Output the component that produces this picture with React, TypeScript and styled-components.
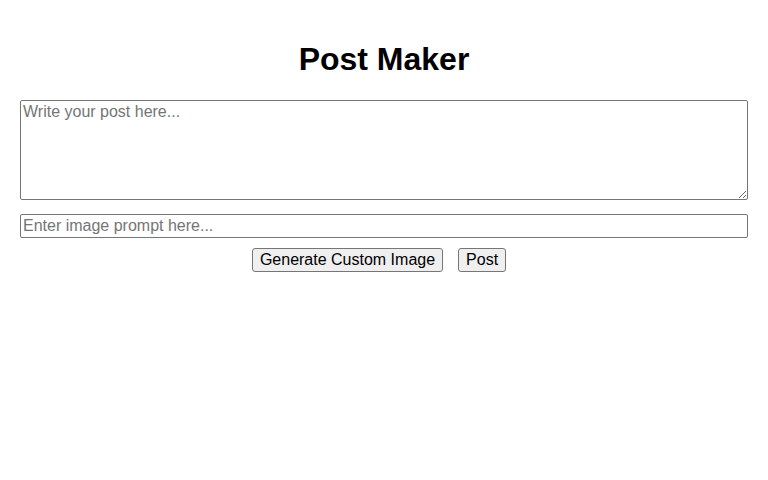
import React, { useState } from 'react';
import styled, { createGlobalStyle } from 'styled-components';

const GlobalStyle = createGlobalStyle`
  html, body {
    margin: 0;
    padding: 0;
    background: #fff;
    font-family: "Liberation Sans", Arial, sans-serif;
  }
`;

const Page = styled('div')`
  padding: 20px;
  display: flex;
  flex-direction: column;
`;

const Title = styled('h1')`
  margin: 21px 0 22px;
  font-size: 32px;
  line-height: 37px;
  font-weight: bold;
  text-align: center;
  color: #000;
`;

const PostArea = styled('textarea')`
  box-sizing: border-box;
  width: 100%;
  height: 100px;
  margin: 0;
  padding: 2px;
  font-family: "Liberation Sans", Arial, sans-serif;
  font-size: 16px;
  border: 1px solid #767676;
  border-radius: 2px;
  resize: vertical;
  &::placeholder {
    color: #757575;
  }
`;

const PromptInput = styled('input')`
  box-sizing: border-box;
  width: 100%;
  height: 24px;
  margin: 14px 0 0;
  padding: 1px 2px;
  font-family: "Liberation Sans", Arial, sans-serif;
  font-size: 16px;
  border: 1px solid #767676;
  border-radius: 2px;
  &::placeholder {
    color: #757575;
  }
`;

const Actions = styled('div')`
  margin-top: 10px;
  display: flex;
  justify-content: center;
  gap: 5px;
`;

const Button = styled('button')`
  box-sizing: border-box;
  height: 24px;
  margin: 0 10px 0 0;
  padding: 1px 7px;
  font-family: "Liberation Sans", Arial, sans-serif;
  font-size: 16px;
  color: #000;
  background-color: #efefef;
  border: 1px solid #767676;
  border-radius: 3px;
  cursor: pointer;
  &:hover {
    background-color: #e5e5e5;
  }
`;

export default function App() {
  const [post, setPost] = useState('');
  const [prompt, setPrompt] = useState('');

  return (
    <>
      <GlobalStyle />
      <Page>
        <Title>Post Maker</Title>
        <PostArea
          placeholder="Write your post here..."
          value={post}
          onChange={(e) => setPost(e.target.value)}
        />
        <PromptInput
          type="text"
          placeholder="Enter image prompt here..."
          value={prompt}
          onChange={(e) => setPrompt(e.target.value)}
        />
        <Actions>
          <Button type="button">Generate Custom Image</Button>
          <Button type="button">Post</Button>
        </Actions>
      </Page>
    </>
  );
}
